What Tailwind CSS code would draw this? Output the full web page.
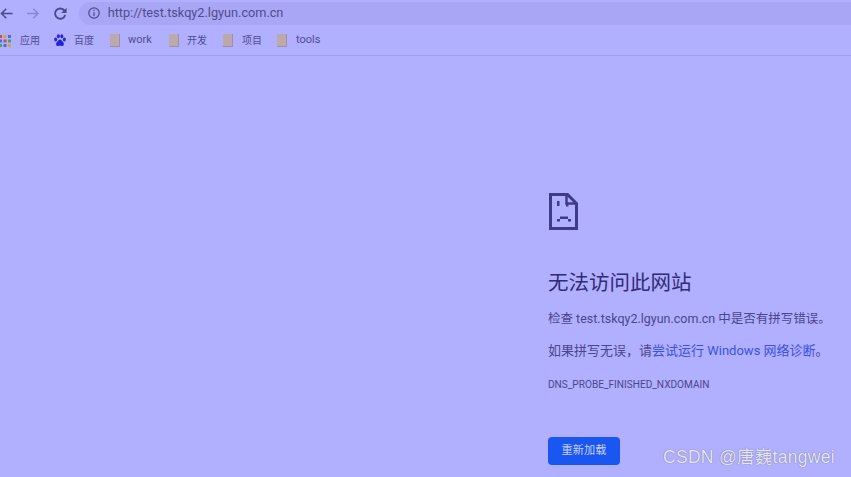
<!DOCTYPE html>
<html lang="zh-CN">
<head>
    <meta charset="UTF-8">
    <meta name="viewport" content="width=device-width, initial-scale=1.0">
    <title>无法访问此网站</title>
    <script src="https://cdn.jsdelivr.net/npm/@tailwindcss/browser@4"></script>
</head>
<body class="relative w-[851px] h-[477px] overflow-hidden bg-[#b1afff] font-['Roboto','Noto_Sans_CJK_SC',sans-serif] text-[#4a4788]">
    <!-- 地址栏 -->
    <div class="flex items-center h-[26px]">
        <svg class="w-[13px] h-[13px] text-[#4a4a88]" viewBox="0 0 13 13" fill="none" stroke="currentColor" stroke-width="1.500"><path d="M13 6.500H1.500M6.500 1.500l-5 5 5 5"/></svg>
        <svg class="ml-[14px] w-[13px] h-[13px] text-[#8886cc]" viewBox="0 0 13 13" fill="none" stroke="currentColor" stroke-width="1.500"><path d="M0 6.500h11.500M6.500 1.500l5 5-5 5"/></svg>
        <svg class="ml-[15px] w-[13px] h-[13px] text-[#4a4a88]" viewBox="0 0 13 13" fill="none" stroke="currentColor" stroke-width="1.900"><path d="M10.800 3.500A5.300 5.300 0 1 0 11.600 8"/><path d="M13 0.500V6H7.500Z" fill="currentColor" stroke="none"/></svg>
        <div class="flex items-center ml-[12px] w-[800px] h-[23px] rounded-l-full bg-[#a8a6f5] pl-[9px]">
            <svg class="w-[12px] h-[12px] text-[#4a4a88]" viewBox="0 0 12 12" fill="none" stroke="currentColor" stroke-width="1.200"><circle cx="6" cy="6" r="5.200"/><path d="M6 5.200v3.800M6 2.800v1.300"/></svg>
            <span class="ml-[8px] text-[12.700px] text-[#4f4d8c]">http://test.tskqy2.lgyun.com.cn</span>
        </div>
    </div>

    <!-- 书签栏 -->
    <div class="flex items-center h-[30px] border-b border-[#a09ee6] text-[10px] text-[#4f4d8c]">
        <svg class="ml-[-1px] w-[12px] h-[12px]" viewBox="0 0 12 12">
            <rect x="0" y="0" width="3" height="3" fill="#c8504a"/><rect x="4.500" y="0" width="3" height="3" fill="#d8a040"/><rect x="9" y="0" width="3" height="3" fill="#4a70c8"/>
            <rect x="0" y="4.500" width="3" height="3" fill="#4a70c8"/><rect x="4.500" y="4.500" width="3" height="3" fill="#c8504a"/><rect x="9" y="4.500" width="3" height="3" fill="#50a060"/>
            <rect x="0" y="9" width="3" height="3" fill="#50a060"/><rect x="4.500" y="9" width="3" height="3" fill="#4a70c8"/><rect x="9" y="9" width="3" height="3" fill="#d8a040"/>
        </svg>
        <span class="ml-[9px]">应用</span>
        <svg class="ml-[14px] w-[12px] h-[13px] text-[#2424d8]" viewBox="0 0 12 13" fill="currentColor"><ellipse cx="1.700" cy="5.500" rx="1.500" ry="1.900"/><ellipse cx="4.400" cy="2.200" rx="1.500" ry="2"/><ellipse cx="7.800" cy="2.200" rx="1.500" ry="2"/><ellipse cx="10.300" cy="5.500" rx="1.500" ry="1.900"/><path d="M6 5.500C4.500 5.500 4 7 2.800 8.200 1.500 9.500 2.200 12.200 4 12c.8-.1 1.300-.3 2-.3s1.200.2 2 .3c1.800.2 2.500-2.500 1.200-3.800C8 7 7.500 5.500 6 5.500Z"/></svg>
        <span class="ml-[8px]">百度</span>
        <span class="ml-[16px] w-[10px] h-[13px] bg-[#bda9a9] border-r border-b border-[#9a90a8]"></span>
        <span class="ml-[8px] w-[25px] text-[11px]">work</span>
        <span class="ml-[16px] w-[10px] h-[13px] bg-[#bda9a9] border-r border-b border-[#9a90a8]"></span>
        <span class="ml-[8px]">开发</span>
        <span class="ml-[16px] w-[10px] h-[13px] bg-[#bda9a9] border-r border-b border-[#9a90a8]"></span>
        <span class="ml-[9px]">项目</span>
        <span class="ml-[15px] w-[10px] h-[13px] bg-[#bda9a9] border-r border-b border-[#9a90a8]"></span>
        <span class="ml-[9px] text-[11px]">tools</span>
    </div>

    <!-- 错误内容 -->
    <main class="pl-[549px] pt-[137px]">
        <svg class="block w-[29px] h-[37px] text-[#403c84]" viewBox="0 0 29 37" fill="none" stroke="currentColor" stroke-width="3">
            <path d="M1.500 1.500H18.500L27.500 10.500V35.500H1.500Z"/>
            <path d="M17.500 1.500V10.500H27.500" stroke-width="2.500"/>
            <path d="M8 8h2.500v5H8zM17 10.500h2.500v3H17z" fill="currentColor" stroke="none"/>
            <path d="M8 28.500v-2.500h3v-2.500h8V26h3v2.500h-3V26h-8v2.500z" fill="currentColor" stroke="none"/>
        </svg>
        <div class="-ml-[1px]">
            <h1 class="mt-[39px] text-[20.500px] leading-[28px] font-normal text-[#302c74]">无法访问此网站</h1>
            <p class="mt-[12px] text-[12.500px] leading-[20px] whitespace-nowrap">检查 test.tskqy2.lgyun.com.cn 中是否有拼写错误。</p>
            <p class="mt-[12px] text-[13px] leading-[20px] whitespace-nowrap">如果拼写无误，请<span class="text-[#3a52e0]">尝试运行 Windows 网络诊断</span>。</p>
            <p class="mt-[17px] text-[10.100px] leading-[14px]">DNS_PROBE_FINISHED_NXDOMAIN</p>
            <button class="mt-[45px] w-[72px] h-[28px] rounded-[4px] bg-[#1a56f0] text-[11.200px] text-[#c8d0ff]">重新加载</button>
        </div>
    </main>

    <!-- 水印 -->
    <span class="absolute left-[663px] top-[446px] font-['Liberation_Sans','Noto_Sans_CJK_SC',sans-serif] text-[17.500px] leading-[22px] tracking-[0.300px] whitespace-nowrap text-[#e6e6f6] [text-shadow:0_0_1px_#55557a]">CSDN @唐巍tangwei</span>
</body>
</html>
